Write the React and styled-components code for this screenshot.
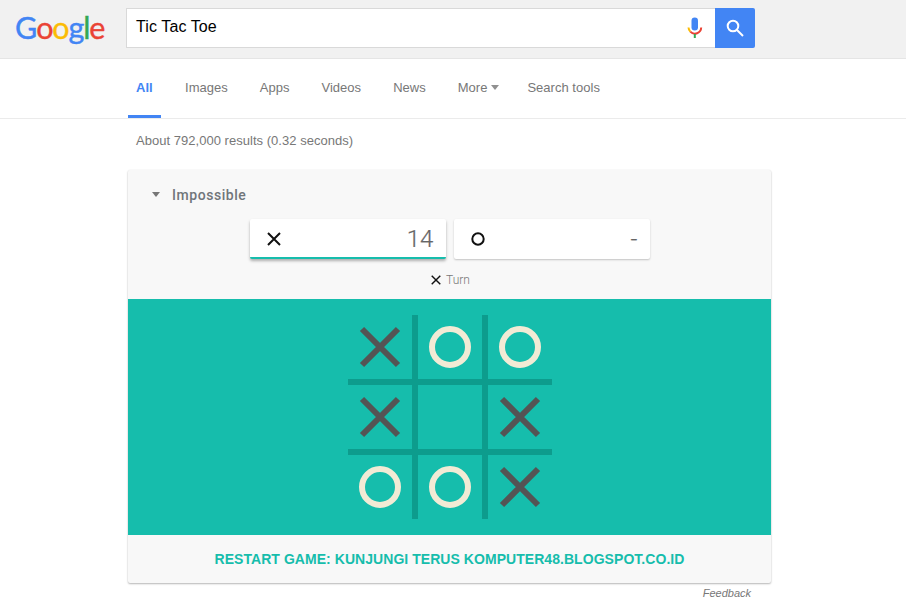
import React from "react";
import styled, { createGlobalStyle } from "styled-components";

const Global = createGlobalStyle`
  html, body { margin: 0; padding: 0; background: #fff; overflow: hidden; }
  body { font-family: "Liberation Sans", Arial, sans-serif; }
  * { box-sizing: border-box; }
`;
const Page = styled.div`width: 906px; height: 606px; display: flex; flex-direction: column;`;
const Header = styled.header`
  height: 59px; background: #f1f1f1; border-bottom: 1px solid #e5e5e5;
  display: flex; align-items: flex-start; padding: 8px 0 0 15px;
`;
const Logo = styled.div`
  width: 111px; height: 39px; display: flex; align-items: center;
  font-family: Lato, sans-serif; font-weight: 400; font-size: 30.5px; line-height: 39px; letter-spacing: -1.15px;
  -webkit-text-stroke: .4px currentColor;
`;
const Letter = styled.span`color: ${p => p.$c};`;
const SearchBox = styled.div`
  width: 589px; height: 40px; background: #fff; border: 1px solid #d9d9d9; border-right: 0;
  display: flex; align-items: center; justify-content: space-between; padding: 0 12px 0 9px;
`;
const Query = styled.span`font-size: 16px; color: #000; letter-spacing: 0.1px; transform: translateY(-1px);`;
const SearchButton = styled.div`
  width: 40px; height: 40px; background: #4285f4; border-radius: 0 2px 2px 0;
  display: flex; align-items: center; justify-content: center;
`;
const Nav = styled.nav`
  height: 60px; border-bottom: 1px solid #ebebeb; display: flex; padding-left: 120px;
`;
const Tab = styled.div`
  height: 59px; padding: 0 8px; margin-left: ${p => p.$first ? 8 : 16}px;
  font-size: 13px; line-height: 57px; white-space: nowrap; display: flex; letter-spacing: .02px;
  color: ${p => p.$active ? "#4285f4" : "#777"};
  font-weight: ${p => p.$active ? 700 : 400};
  border-bottom: 3px solid ${p => p.$active ? "#4285f4" : "transparent"};
  min-width: ${p => p.$active ? "33px" : "0"};
`;
const ToolsTab = styled(Tab)`margin-left: 12px;`;
const Caret = styled.i`
  display: inline-block; width: 0; height: 0; border-left: 4px solid transparent;
  border-right: 4px solid transparent; border-top: 5px solid ${p => p.$c || "#909090"};
  align-self: center; margin-left: ${p => p.$ml || 0}px;
`;
const Stats = styled.div`
  padding: 14px 0 0 136px; height: 51px; font-size: 13px; line-height: 16px; color: #777; letter-spacing: .03px;
`;
const Card = styled.section`
  width: 643px; margin-left: 128px; background: #f8f8f8; border-radius: 2px;
  box-shadow: 0 1px 2px rgba(0,0,0,.28), 0 0 2px rgba(0,0,0,.06);
`;
const Level = styled.div`
  height: 49px; padding: 0 0 0 24px; display: flex; align-items: center; gap: 12px;
  font-family: Roboto, sans-serif; font-weight: 500; font-size: 14px; letter-spacing: .55px; color: #70757a;
`;
const Scores = styled.div`display: flex; justify-content: center; gap: 8px;`;
const Chip = styled.div`
  width: 196px; height: 40px; background: #fff; border-radius: 2px;
  display: flex; align-items: center; justify-content: space-between; padding: 2px 12px 0 17px;
  box-shadow: ${p => p.$active ? "0 2px 3px rgba(0,0,0,.3)" : "0 1px 2px rgba(0,0,0,.22)"};
  border-bottom: 2px solid ${p => p.$active ? "#16bdac" : "transparent"};
`;
const Score = styled.span`
  font-family: Roboto, sans-serif; font-weight: 300; font-size: 24px; color: #666; letter-spacing: .1px;
  -webkit-text-stroke: .2px currentColor;
`;
const Turn = styled.div`
  height: 40px; display: flex; align-items: center; justify-content: center; gap: 5px;
  font-family: Roboto, sans-serif; font-weight: 300; font-size: 12px; color: #777;
  padding: 2px 0 0 2px;
`;
const Board = styled.div`
  height: 236px; background: #16bdac; display: flex; align-items: center; justify-content: center;
`;
const Footer = styled.div`
  height: 48px; display: flex; align-items: center; justify-content: center;
  font-size: 14px; font-weight: 700; letter-spacing: .05px; color: #16bdac;
`;
const Feedback = styled.div`
  width: 751px; text-align: right; font-size: 11px; font-style: italic; color: #777; padding-top: 4px; line-height: 13px;
`;

const SmallX = ({ size, w }) => (
  <svg width={size} height={size} viewBox="0 0 14 14"><path d="M1 1 13 13M13 1 1 13" stroke="#111" strokeWidth={w} fill="none" /></svg>
);
const cx = [32, 102, 172], cy = [32, 102, 172];
const cells = [["x","o","o"],["x",null,"x"],["o","o","x"]];

const BoardArt = () => (
  <svg width="204" height="204" viewBox="0 0 204 204">
    <g fill="#0d9c8d">
      <rect x="64" width="6" height="204" /><rect x="134" width="6" height="204" />
      <rect y="64" width="204" height="6" /><rect y="134" width="204" height="6" />
    </g>
    {cells.map((row, r) => row.map((c, i) => c === "x" ? (
      <path key={`${r}${i}`} d={`M${cx[i]-18} ${cy[r]-18}L${cx[i]+18} ${cy[r]+18}M${cx[i]+18} ${cy[r]-18}L${cx[i]-18} ${cy[r]+18}`} stroke="#545454" strokeWidth="6" />
    ) : c === "o" ? (
      <circle key={`${r}${i}`} cx={cx[i]} cy={cy[r]} r="18" fill="none" stroke="#f2ebd5" strokeWidth="6" />
    ) : null))}
  </svg>
);

export default function App() {
  return (
    <Page>
      <Global />
      <Header>
        <Logo>
          <Letter $c="#4285f4">G</Letter><Letter $c="#ea4335">o</Letter><Letter $c="#fbbc05">o</Letter>
          <Letter $c="#4285f4">g</Letter><Letter $c="#34a853">l</Letter><Letter $c="#ea4335">e</Letter>
        </Logo>
        <SearchBox>
          <Query>Tic Tac Toe</Query>
          <svg width="16" height="22" viewBox="0 0 16 22">
            <rect x="4.5" y="0.5" width="6.5" height="13" rx="3.25" fill="#4285f4" />
            <path d="M1.5 10.5A6.3 6.3 0 0 0 3.3 14.6" stroke="#fbbc05" strokeWidth="2" fill="none" />
            <path d="M3.3 14.6A6.3 6.3 0 0 0 14.2 10.5" stroke="#ea4335" strokeWidth="2" fill="none" />
            <rect x="6.8" y="17" width="2" height="4" fill="#34a853" />
          </svg>
        </SearchBox>
        <SearchButton>
          <svg width="18" height="18" viewBox="0 0 18 18" fill="none" stroke="#fff" strokeWidth="2">
            <circle cx="7" cy="7" r="5.3" /><path d="M11 11 17 17" />
          </svg>
        </SearchButton>
      </Header>
      <Nav>
        <Tab $active $first>All</Tab>
        <Tab>Images</Tab>
        <Tab>Apps</Tab>
        <Tab>Videos</Tab>
        <Tab>News</Tab>
        <Tab>More<Caret $ml={4} /></Tab>
        <ToolsTab>Search tools</ToolsTab>
      </Nav>
      <Stats>About 792,000 results (0.32 seconds)</Stats>
      <Card>
        <Level><Caret $c="#777" />Impossible</Level>
        <Scores>
          <Chip $active><SmallX size={14} w={2} /><Score>14</Score></Chip>
          <Chip>
            <svg width="14" height="14" viewBox="0 0 14 14"><circle cx="7" cy="7" r="5.7" fill="none" stroke="#111" strokeWidth="2" /></svg>
            <Score>-</Score>
          </Chip>
        </Scores>
        <Turn><SmallX size={10} w={2} />Turn</Turn>
        <Board><BoardArt /></Board>
        <Footer>RESTART GAME: KUNJUNGI TERUS KOMPUTER48.BLOGSPOT.CO.ID</Footer>
      </Card>
      <Feedback>Feedback</Feedback>
    </Page>
  );
}
